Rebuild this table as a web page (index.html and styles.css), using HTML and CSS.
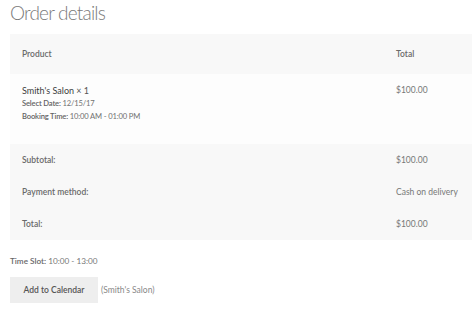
FILE: index.html
```html
<!DOCTYPE html>
<html>
<head>
<meta charset="utf-8">
<link rel="stylesheet" href="styles.css">
</head>
<body>
<div class="page">
  <h2 class="title">Order details</h2>
  <table class="order">
    <thead>
      <tr class="head-row"><th class="col-product">Product</th><th class="col-total">Total</th></tr>
    </thead>
    <tbody>
      <tr class="item-row">
        <td class="col-product">
          <div class="item-name">Smith's Salon <span class="qty">× 1</span></div>
          <div class="meta"><strong>Select Date:</strong> 12/15/17</div>
          <div class="meta"><strong>Booking Time:</strong> 10:00 AM - 01:00 PM</div>
        </td>
        <td class="col-total">$100.00</td>
      </tr>
    </tbody>
    <tfoot>
      <tr class="foot-row"><th class="col-product">Subtotal:</th><td class="col-total">$100.00</td></tr>
      <tr class="foot-row"><th class="col-product">Payment method:</th><td class="col-total">Cash on delivery</td></tr>
      <tr class="foot-row"><th class="col-product">Total:</th><td class="col-total">$100.00</td></tr>
    </tfoot>
  </table>
  <p class="slot"><strong>Time Slot:</strong> 10:00 - 13:00</p>
  <div class="cal">
    <button class="cal-btn">Add to Calendar</button>
    <span class="cal-note">(Smith's Salon)</span>
  </div>
</div>
</body>
</html>
```
FILE: styles.css
```css
html, body {
  margin: 0;
  padding: 0;
  background: #ffffff;
}
body {
  font-family: "Lato", "Liberation Sans", sans-serif;
  color: #6d6d6d;
  font-size: 8.5px;
}
.page {
  padding: 0 2px 0 10px;
}
.title {
  margin: 0;
  padding-top: 0;
  height: 34px;
  font-size: 19px;
  letter-spacing: -0.8px;
  font-weight: 300;
  color: #7a7a7a;
  line-height: 26px;
}
.order {
  width: 100%;
  border-collapse: collapse;
  border-spacing: 0;
}
.order th, .order td {
  text-align: left;
  padding: 0 0 0 12px;
  vertical-align: middle;
}
.order th {
  font-weight: 600;
  color: #6a6a6a;
}
.order td {
  color: #777;
}
.col-total {
  width: 76px;
}
.head-row {
  background: #f8f8f8;
  height: 40px;
}
.item-row {
  background: #fdfdfd;
  height: 70px;
}
.item-row td {
  vertical-align: top;
  padding-top: 10px;
}
.item-name {
  font-size: 9px;
  color: #3e3e3e;
  line-height: 13px;
}
.qty {
  color: #555;
}
.meta {
  font-size: 7.6px;
  letter-spacing: -0.15px;
  line-height: 13px;
  color: #717171;
}
.meta strong {
  font-weight: 600;
  color: #626262;
}
.item-row .col-total {
  padding-top: 10px;
  line-height: 13px;
}
.foot-row {
  background: #f8f8f8;
  height: 32px;
}
.slot {
  margin: 15px 0 0 0;
  line-height: 12px;
  font-size: 8.2px;
  color: #777;
}
.slot strong {
  font-weight: 600;
  color: #666;
}
.cal {
  margin-top: 10px;
  display: flex;
  align-items: center;
  gap: 3px;
}
.cal-btn {
  border: none;
  background: #eeeeee;
  font-family: inherit;
  font-size: 8.5px;
  font-weight: 600;
  color: #555;
  width: 88px;
  height: 26px;
  padding: 0;
}
.cal-note {
  font-size: 8.5px;
  color: #888;
}
```
